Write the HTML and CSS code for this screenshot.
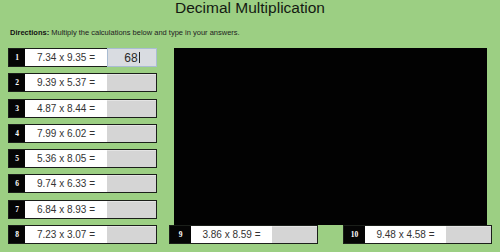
FILE: index.html
```html
<!DOCTYPE html>
<html lang="en">
<head>
<meta charset="utf-8">
<title>Decimal Multiplication</title>
<link rel="stylesheet" href="styles.css">
</head>
<body>
<h1 class="title">Decimal Multiplication</h1>
<p class="directions"><b>Directions:</b> Multiply the calculations below and type in your answers.</p>
<div class="main">
  <div class="list">
    <div class="row"><span class="num">1</span><span class="q">7.34 x 9.35 =</span><span class="ans active">68<span class="caret"></span></span></div>
    <div class="row"><span class="num">2</span><span class="q">9.39 x 5.37 =</span><span class="ans"></span></div>
    <div class="row"><span class="num">3</span><span class="q">4.87 x 8.44 =</span><span class="ans"></span></div>
    <div class="row"><span class="num">4</span><span class="q">7.99 x 6.02 =</span><span class="ans"></span></div>
    <div class="row"><span class="num">5</span><span class="q">5.36 x 8.05 =</span><span class="ans"></span></div>
    <div class="row"><span class="num">6</span><span class="q">9.74 x 6.33 =</span><span class="ans"></span></div>
    <div class="row"><span class="num">7</span><span class="q">6.84 x 8.93 =</span><span class="ans"></span></div>
  </div>
  <div class="panel"></div>
</div>
<div class="bottom">
  <div class="row"><span class="num">8</span><span class="q">7.23 x 3.07 =</span><span class="ans"></span></div>
  <div class="row row-wide row-9"><span class="num">9</span><span class="q">3.86 x 8.59 =</span><span class="ans"></span></div>
  <div class="row row-wide row-10"><span class="num">10</span><span class="q">9.48 x 4.58 =</span><span class="ans"></span></div>
</div>
</body>
</html>
```

FILE: styles.css
```css
html, body {
  margin: 0;
  padding: 0;
}
body {
  width: 500px;
  height: 252px;
  background: #9ccf83;
  font-family: "Liberation Sans", Arial, sans-serif;
  color: #1a1a1a;
  overflow: hidden;
}
.title {
  margin: 0;
  font-size: 15.5px;
  line-height: 16px;
  font-weight: normal;
  text-align: center;
  color: #141a12;
}
.directions {
  margin: 12px 0 0 10px;
  font-size: 7.5px;
  line-height: 10px;
  color: #222;
}
.directions b {
  color: #111;
}
.main {
  display: flex;
  gap: 17px;
  margin: 10px 0 0 8px;
}
.list {
  display: flex;
  flex-direction: column;
  gap: 6.3px;
  width: 149px;
}
.panel {
  width: 313px;
  height: 177.1px;
  background: #020202;
}
.row {
  display: flex;
  width: 149px;
  height: 19px;
  box-sizing: border-box;
  border: 1px solid #1b1f1a;
  background: #fff;
}
.num {
  width: 16px;
  flex: none;
  background: #050505;
  color: #fff;
  font-family: "Liberation Serif", "Times New Roman", serif;
  font-weight: bold;
  font-size: 7.5px;
  display: flex;
  align-items: center;
  justify-content: center;
}
.q {
  flex: 1;
  display: flex;
  align-items: center;
  justify-content: center;
  font-size: 10px;
  color: #333;
}
.ans {
  width: 49px;
  flex: none;
  box-sizing: border-box;
  background: #d5d5d5;
  border-top: 1px solid #e4e4e4;
  display: flex;
  align-items: center;
  justify-content: center;
  font-size: 12px;
  color: #2a2a2a;
}
.ans.active {
  margin: -1px -1px -1px 0;
  width: 50px;
  border: 1px solid #a9bcd2;
  background: #d9dce1;
}
.caret {
  display: inline-block;
  width: 1px;
  height: 11px;
  margin-left: 1px;
  background: #222;
}
.bottom {
  display: flex;
  margin-left: 8px;
}
.row-9 {
  margin-left: 12px;
}
.row-10 {
  margin-left: 25px;
}
.row-wide .num {
  width: 21px;
}
.row-wide .ans {
  width: 45px;
}
```
